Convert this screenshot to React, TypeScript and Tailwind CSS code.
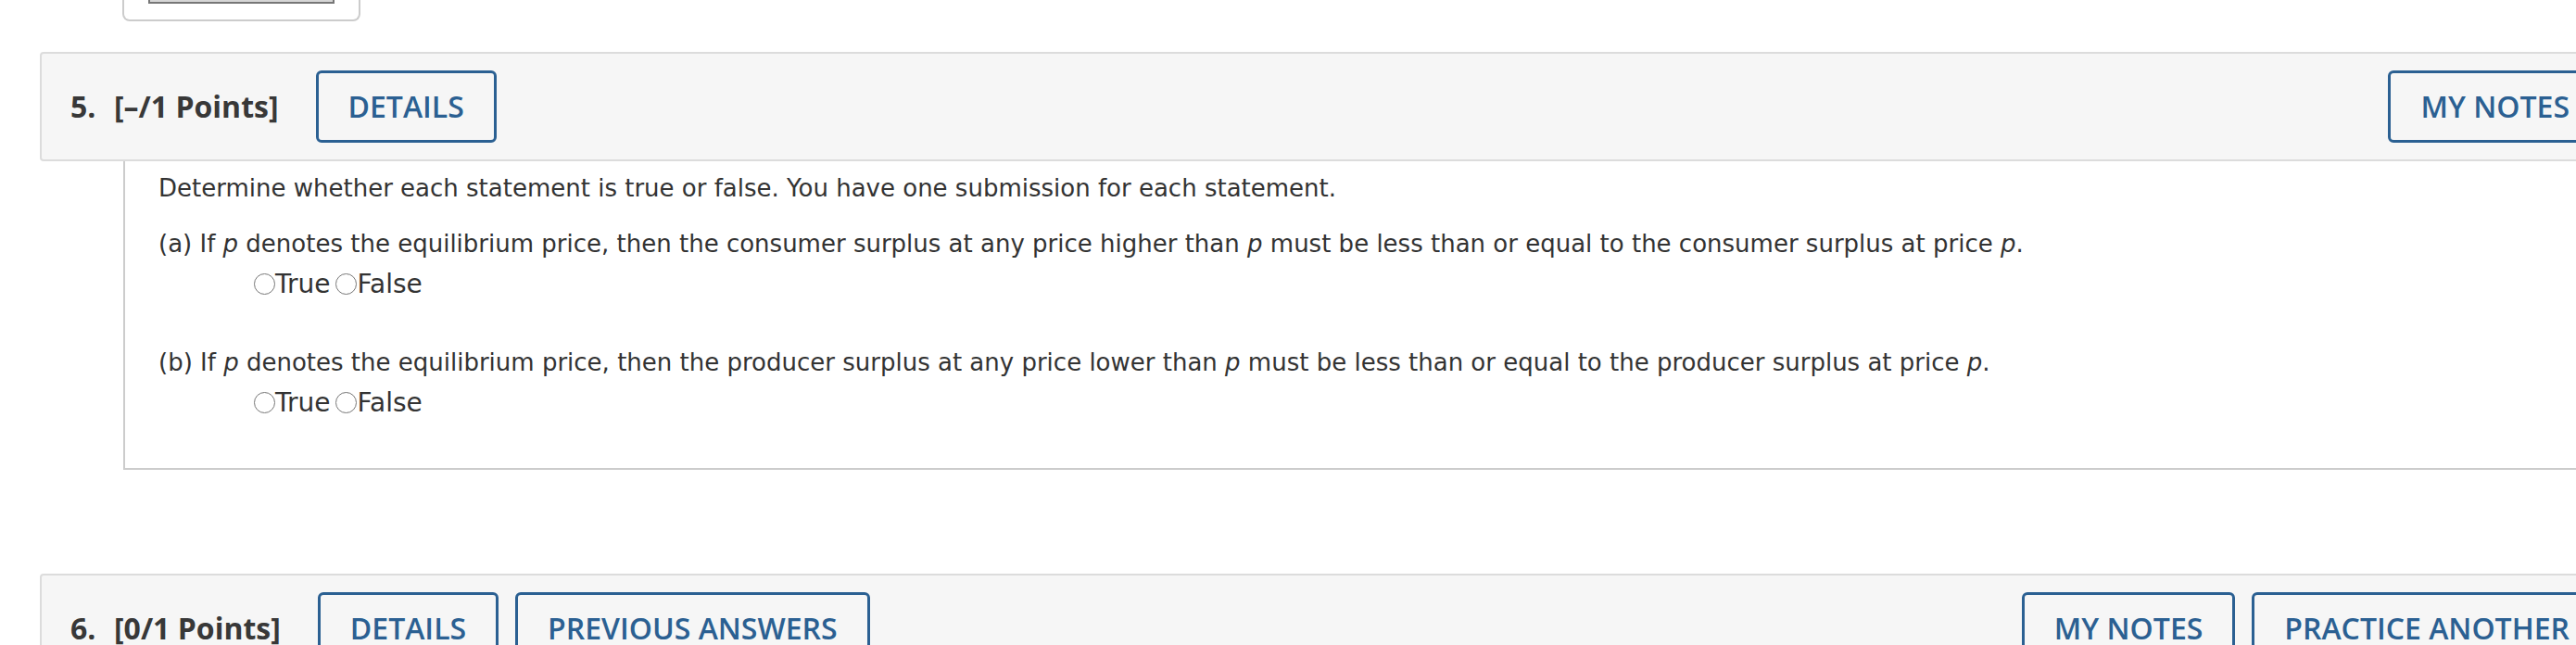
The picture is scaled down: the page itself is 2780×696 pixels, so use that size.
import React from "react";

const headFont = "font-['Open_Sans',sans-serif]";
const bodyFont = "font-['DejaVu_Sans',Verdana,sans-serif]";

function Btn({ children }: { children: React.ReactNode }) {
  return (
    <div
      className={`flex h-[78px] shrink-0 items-center rounded-[6px] border-[3px] border-[#2b6092] px-[32px] text-[32px] font-semibold leading-none text-[#2b6092] ${headFont}`}
    >
      {children}
    </div>
  );
}

function Header({ num, pts, left, right }: { num: string; pts: string; left: string[]; right: string[] }) {
  return (
    <div className="flex h-[118px] items-center justify-between rounded-[4px] border-2 border-[#dcdcdc] bg-[#f6f6f6] pl-[31px] pr-[31px]">
      <div className="flex items-center">
        <span className={`w-[47px] text-[32px] font-bold text-[#383838] ${headFont}`}>{num}</span>
        <span className={`mr-[40px] text-[32px] font-bold text-[#383838] ${headFont}`}>{pts}</span>
        <div className="flex gap-[18px]">
          {left.map((l) => (
            <Btn key={l}>{l}</Btn>
          ))}
        </div>
      </div>
      <div className="flex gap-[18px]">
        {right.map((l) => (
          <Btn key={l}>{l}</Btn>
        ))}
      </div>
    </div>
  );
}

function Radio({ label }: { label: string }) {
  return (
    <span className="flex items-center">
      <span className="mb-[2px] inline-block h-[23px] w-[23px] shrink-0 rounded-full border-[1.5px] border-[#777] bg-white" />
      <span>{label}</span>
    </span>
  );
}

export default function App() {
  return (
    <div className="h-[696px] w-[2780px] overflow-hidden bg-white">
      <div className="w-[2841px] pl-[43px]">
        <div className="ml-[89px] flex h-[23px] w-[257px] justify-center rounded-b-[8px] border-2 border-t-0 border-[#cccccc]">
          <div className="h-[4px] w-[201px] border-2 border-t-0 border-[#777777] bg-[#d6d6d6]" />
        </div>
        <div className="mt-[33px]">
          <Header num="5." pts="[–/1 Points]" left={["DETAILS"]} right={["MY NOTES"]} />
        </div>
        <div
          className={`ml-[90px] border-b-2 border-l-2 border-[#cccccc] pb-[48px] pl-[36px] pt-[7px] text-[26px] leading-[44px] text-[#333333] ${bodyFont}`}
        >
          <p>Determine whether each statement is true or false. You have one submission for each statement.</p>
          <p className="mt-[16px]">
            (a) If <i>p</i> denotes the equilibrium price, then the consumer surplus at any price higher than <i>p</i> must be
            less than or equal to the consumer surplus at price <i>p</i>.
          </p>
          <div className="ml-[103px] flex gap-[6px] text-[28px]">
            <Radio label="True" />
            <Radio label="False" />
          </div>
          <p className="mt-[40px]">
            (b) If <i>p</i> denotes the equilibrium price, then the producer surplus at any price lower than <i>p</i> must be
            less than or equal to the producer surplus at price <i>p</i>.
          </p>
          <div className="ml-[103px] flex gap-[6px] text-[28px]">
            <Radio label="True" />
            <Radio label="False" />
          </div>
        </div>
        <div className="mt-[112px]">
          <Header
            num="6."
            pts="[0/1 Points]"
            left={["DETAILS", "PREVIOUS ANSWERS"]}
            right={["MY NOTES", "PRACTICE ANOTHER"]}
          />
        </div>
      </div>
    </div>
  );
}
